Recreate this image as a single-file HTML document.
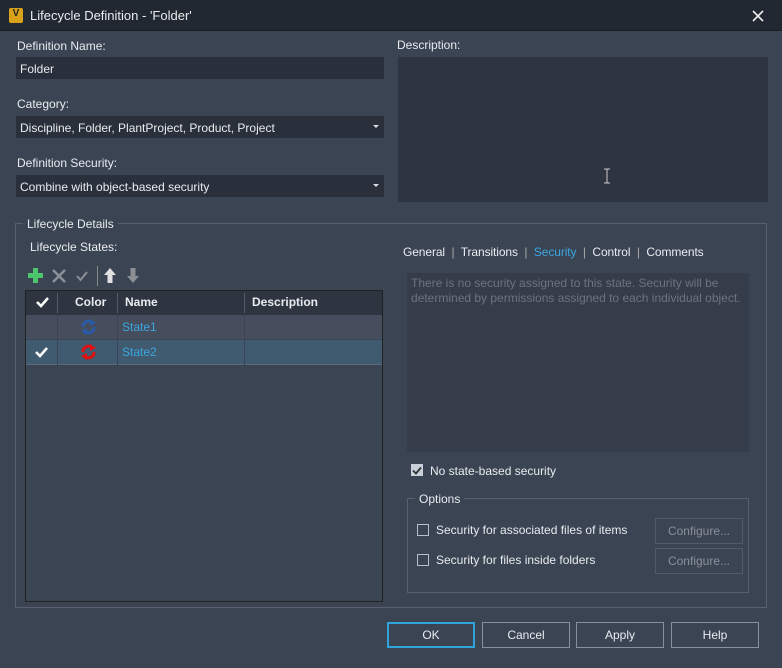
<!DOCTYPE html>
<html><head><meta charset="utf-8"><style>
*{box-sizing:border-box;margin:0;padding:0}
body{width:782px;height:668px;background:#3b4453;font-family:"Liberation Sans",sans-serif;font-size:12px;color:#e8ecf0;position:relative;overflow:hidden}
.a{position:absolute;white-space:nowrap}
.inp{position:absolute;background:#2a303b;padding:5px 4px;height:22px}
.dd:after{content:"";position:absolute;right:5px;top:9px;border:3px solid transparent;border-top:3px solid #ddd;border-bottom:0;width:0}
.btn{position:absolute;border:1px solid #8a909a;text-align:center;line-height:24px;height:26px;font-size:12px}
.cb{position:absolute;width:12px;height:12px;border:1px solid #b8bec8}
</style></head><body>
<div class="a" style="left:0;top:0;width:782px;height:31px;background:#222831;border-bottom:1px solid #1a1e24"></div>
<div class="a" style="left:9px;top:8px;width:14px;height:15px;background:#d9a21a;border-radius:2px;color:#222;font-weight:bold;font-size:10px;text-align:center;line-height:11px">V</div>
<div class="a" style="left:30px;top:8px;font-size:13px">Lifecycle Definition - 'Folder'</div>
<svg class="a" style="left:752px;top:10px" width="12" height="12"><path d="M1 1L11 11M11 1L1 11" stroke="#eee" stroke-width="1.6"/></svg>

<div class="a" style="left:17px;top:39px">Definition Name:</div>
<div class="inp" style="left:16px;top:57px;width:368px">Folder</div>
<div class="a" style="left:17px;top:97px">Category:</div>
<div class="inp dd" style="left:16px;top:116px;width:368px">Discipline, Folder, PlantProject, Product, Project</div>
<div class="a" style="left:17px;top:156px">Definition Security:</div>
<div class="inp dd" style="left:16px;top:175px;width:368px">Combine with object-based security</div>
<div class="a" style="left:397px;top:38px">Description:</div>
<div class="a" style="left:398px;top:57px;width:370px;height:145px;background:#2e3440"></div>
<svg class="a" style="left:603px;top:168px" width="8" height="16"><path d="M1 1H7M4 1V15M1 15H7" stroke="#ccc" stroke-width="1"/></svg>

<div class="a" style="left:15px;top:223px;width:752px;height:385px;border:1px solid #596170"></div>
<div class="a" style="left:23px;top:217px;background:#3b4453;padding:0 4px">Lifecycle Details</div>
<div class="a" style="left:30px;top:240px">Lifecycle States:</div>
<svg class="a" style="left:28px;top:268px" width="15" height="15"><path d="M5 0H10V5H15V10H10V15H5V10H0V5H5Z" fill="#4cc66a"/></svg>
<svg class="a" style="left:52px;top:269px" width="14" height="14"><path d="M1 1L13 13M13 1L1 13" stroke="#8a8f98" stroke-width="2.5"/></svg>
<svg class="a" style="left:76px;top:270px" width="12" height="12"><path d="M1 6L4.5 10L11 2" stroke="#8a8f98" stroke-width="2" fill="none"/></svg>
<div class="a" style="left:97px;top:266px;width:1px;height:20px;background:#888"></div>
<svg class="a" style="left:104px;top:268px" width="12" height="15"><path d="M6 0L12 7H8.5V15H3.5V7H0Z" fill="#e0e0e0"/></svg>
<svg class="a" style="left:127px;top:268px" width="12" height="15"><path d="M6 15L12 8H8.5V0H3.5V8H0Z" fill="#8d8f94"/></svg>

<div class="a" style="left:25px;top:290px;width:358px;height:312px;background:#3b4453;border:1px solid #222"></div>
<div class="a" style="left:26px;top:291px;width:356px;height:24px;background:#2f3540"></div>
<div class="a" style="left:57px;top:293px;width:1px;height:20px;background:#555c68"></div>
<div class="a" style="left:117px;top:293px;width:1px;height:20px;background:#555c68"></div>
<div class="a" style="left:244px;top:293px;width:1px;height:20px;background:#555c68"></div>
<svg class="a" style="left:36px;top:296px" width="13" height="12"><path d="M1 6L5 10L12 2" stroke="#fff" stroke-width="2.5" fill="none"/></svg>
<div class="a" style="left:75px;top:295px;font-weight:bold">Color</div>
<div class="a" style="left:125px;top:295px;font-weight:bold">Name</div>
<div class="a" style="left:252px;top:295px;font-weight:bold">Description</div>
<div class="a" style="left:26px;top:315px;width:356px;height:25px;background:#464d5c;border-bottom:1px solid #3b4453"></div>
<div class="a" style="left:26px;top:340px;width:356px;height:25px;background:#405a70;border-bottom:1px solid #5a6a7a"></div>
<div class="a" style="left:57px;top:315px;width:1px;height:50px;background:#3b4453"></div>
<div class="a" style="left:117px;top:315px;width:1px;height:50px;background:#3b4453"></div>
<div class="a" style="left:244px;top:315px;width:1px;height:50px;background:#3b4453"></div>
<svg class="a" style="left:80px;top:319px" width="17" height="16"><g fill="none" stroke="#2a5aa8" stroke-width="3"><path d="M3 8A5.5 5.5 0 0 1 12 3.5"/><path d="M14 8A5.5 5.5 0 0 1 5 12.5"/></g><path d="M10 0L16 4L10 7Z M7 9L1 12L7 16Z" fill="#2a5aa8"/></svg>
<svg class="a" style="left:80px;top:344px" width="17" height="16"><g fill="none" stroke="#e01010" stroke-width="3"><path d="M3 8A5.5 5.5 0 0 1 12 3.5"/><path d="M14 8A5.5 5.5 0 0 1 5 12.5"/></g><path d="M10 0L16 4L10 7Z M7 9L1 12L7 16Z" fill="#e01010"/></svg>
<div class="a" style="left:122px;top:320px;color:#3ba7e0">State1</div>
<div class="a" style="left:122px;top:345px;color:#3ba7e0">State2</div>
<svg class="a" style="left:35px;top:346px" width="13" height="12"><path d="M1 6L5 10L12 2" stroke="#fff" stroke-width="2.5" fill="none"/></svg>

<div class="a" style="left:403px;top:245px;letter-spacing:-0.1px">General&nbsp; <span style="color:#aaa">|</span>&nbsp; Transitions&nbsp; <span style="color:#aaa">|</span>&nbsp; <span style="color:#3ba7e0">Security</span>&nbsp; <span style="color:#aaa">|</span>&nbsp; Control&nbsp; <span style="color:#aaa">|</span>&nbsp; Comments</div>
<div class="a" style="left:407px;top:273px;width:342px;height:179px;background:#353d4a;color:#6d7480;padding:3px 4px;white-space:normal;line-height:15px">There is no security assigned to this state. Security will be determined by permissions assigned to each individual object.</div>
<div class="a" style="left:411px;top:464px;width:12px;height:12px;background:#c8d0dc"></div>
<svg class="a" style="left:412px;top:466px" width="10" height="9"><path d="M1 4.5L4 7.5L9 1.5" stroke="#333" stroke-width="1.8" fill="none"/></svg>
<div class="a" style="left:430px;top:464px">No state-based security</div>
<div class="a" style="left:407px;top:498px;width:342px;height:95px;border:1px solid #596170"></div>
<div class="a" style="left:415px;top:492px;background:#3b4453;padding:0 4px">Options</div>
<div class="cb" style="left:417px;top:524px"></div>
<div class="a" style="left:436px;top:523px">Security for associated files of items</div>
<div class="cb" style="left:417px;top:554px"></div>
<div class="a" style="left:436px;top:553px">Security for files inside folders</div>
<div class="btn" style="left:655px;top:518px;width:88px;border-color:#535a66;color:#8a909a">Configure...</div>
<div class="btn" style="left:655px;top:548px;width:88px;border-color:#535a66;color:#8a909a">Configure...</div>

<div class="btn" style="left:387px;top:622px;width:88px;border:2px solid #2ea3dc;line-height:22px">OK</div>
<div class="btn" style="left:482px;top:622px;width:88px">Cancel</div>
<div class="btn" style="left:576px;top:622px;width:88px">Apply</div>
<div class="btn" style="left:671px;top:622px;width:88px">Help</div>
</body></html>
